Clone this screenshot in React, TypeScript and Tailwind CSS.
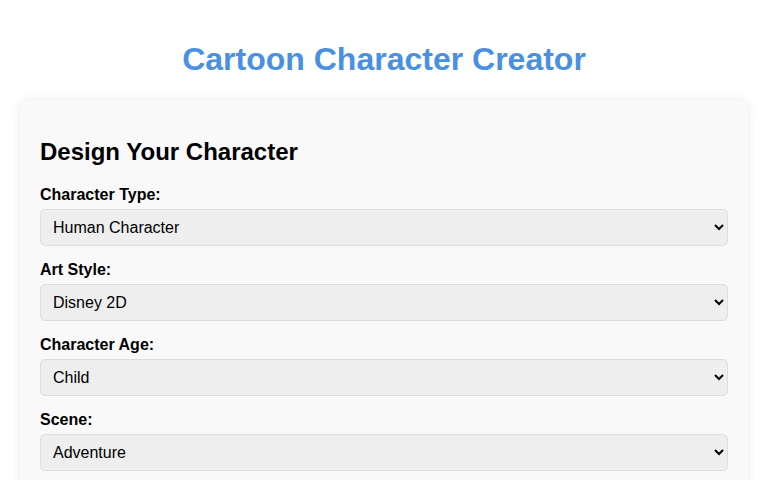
import React from "react";

const groups = [
  { label: "Character Type:", options: ["Human Character", "Animal Character", "Robot Character"] },
  { label: "Art Style:", options: ["Disney 2D", "Pixar 3D", "Anime"] },
  { label: "Character Age:", options: ["Child", "Teen", "Adult"] },
  { label: "Scene:", options: ["Adventure", "Fantasy", "Space"] },
];

export default function App() {
  return (
    <div className="min-h-screen bg-white p-5 text-black" style={{ fontFamily: '"Liberation Sans", Arial, sans-serif' }}>
      <h1 className="my-[21.44px] text-center text-[32px] font-bold leading-[normal] text-[#4a90e2]">
        Cartoon Character Creator
      </h1>
      <div className="rounded-[10px] bg-[#f9f9f9] p-5 shadow-[0_0_10px_rgba(0,0,0,0.1)]">
        <h2 className="mt-[18px] mb-[19.92px] text-[24px] font-bold leading-[normal]">Design Your Character</h2>
        {groups.map((g) => (
          <div key={g.label} className="mb-[15px]">
            <label className="mb-[5px] block text-base font-bold leading-[normal]">{g.label}</label>
            <select
              defaultValue={g.options[0]}
              className="w-full rounded-[5px] border border-[#ddd] bg-[#eeeeee] p-2 text-base leading-[normal]"
            >
              {g.options.map((o) => (
                <option key={o}>{o}</option>
              ))}
            </select>
          </div>
        ))}
      </div>
    </div>
  );
}
